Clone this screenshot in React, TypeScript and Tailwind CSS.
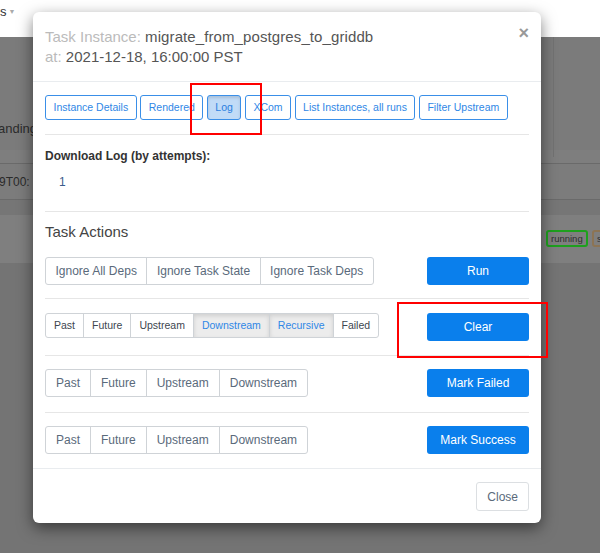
import React from "react";

const font = { fontFamily: '"Liberation Sans", Arial, sans-serif' };

function Hr() {
  return <div className="h-px bg-[#e6e6e6]" />;
}

function Seg({ items, size, active = [] as string[], variant, pad }: { items: string[]; size: "sm" | "md"; active?: string[]; variant: "dark" | "slate"; pad: string }) {
  return (
    <div className="flex">
      {items.map((t, i) => {
        const isActive = active.includes(t);
        const first = i === 0;
        const last = i === items.length - 1;
        return (
          <div
            key={t}
            className={[
              "flex items-center justify-center border border-[#cfd3d7]",
              size === "sm" ? "h-[25px] text-[10.5px]" : "h-[28px] text-[12px]",
              pad,
              first ? "rounded-l-[3px]" : "-ml-px",
              last ? "rounded-r-[3px]" : "",
              isActive
                ? "bg-[#ececec] text-[#2f87e6] shadow-[inset_0_2px_4px_rgba(0,0,0,0.12)] border-[#c2c2c2]"
                : variant === "dark"
                ? "bg-white text-[#3d4650]"
                : "bg-white text-[#5a6a7b]",
            ].join(" ")}
          >
            {t}
          </div>
        );
      })}
    </div>
  );
}

function Primary({ label }: { label: string }) {
  return (
    <div className="w-[102px] h-[28px] rounded-[3px] bg-[#0a7fec] text-white text-[12px] flex items-center justify-center">
      {label}
    </div>
  );
}

function Tab({ label, active = false }: { label: string; active?: boolean }) {
  return (
    <div
      className={
        "h-[25px] px-[7.5px] flex items-center rounded-[3px] border border-[#3a8fe8] text-[10.5px] " +
        (active ? "bg-[#c1dbf7] text-[#2a7fe0] shadow-[inset_0_2px_3px_rgba(0,0,0,0.12)]" : "bg-white text-[#2f87e6]")
      }
    >
      {label}
    </div>
  );
}

export default function App() {
  return (
    <div className="relative w-[600px] h-[553px] overflow-hidden bg-[#747474]" style={font}>
      {/* background page */}
      <div className="flex flex-col">
        <div className="h-[37px] bg-white flex items-start pt-[3px]">
          <span className="text-[13px] text-[#333] leading-[18px]">s</span>
          <span className="text-[7px] text-[#aaa] ml-[2px] mt-[4px]">▼</span>
        </div>
        <div className="h-[113px] bg-[#7b7b7b] relative">
          <div className="absolute left-[-2px] top-[82px] text-[13px] text-[#2b2b2b]">anding</div>
          <div className="absolute left-[553px] top-0 w-px h-[120px] bg-[#727272]" />
        </div>
        <div className="h-[13px] bg-[#7e7e7e]" />
        <div className="h-[37px] bg-[#7c7c7c] border-y border-[#6a6a6a] flex items-center">
          <span className="text-[12px] text-[#2a2a2a] ml-[-1px]">9T00:</span>
        </div>
        <div className="h-[15px] bg-[#767676]" />
        <div className="h-[48px] bg-[#7f7f7f] relative">
          <div className="absolute left-[546px] top-[15px] h-[17px] px-[3px] rounded-[3px] border-2 border-[#1ea01e] text-[9.5px] leading-[13px] text-[#2e2e2e]">
            running
          </div>
          <div className="absolute left-[592px] top-[15px] h-[17px] w-[20px] px-[3px] rounded-[3px] border-2 border-[#8c7454] text-[9.5px] leading-[13px] text-[#2e2e2e]">
            s
          </div>
        </div>
      </div>

      {/* modal */}
      <div className="absolute left-[33px] top-[12px] w-[508px] h-[511px] bg-white rounded-[6px] shadow-[0_5px_15px_rgba(0,0,0,0.5)] flex flex-col">
        <div className="px-[12px] pt-[15px] pb-[14px] border-b border-[#e9ecef] relative">
          <div className="text-[15px] leading-[20px] text-[#bbbbbb]">
            Task Instance: <span className="text-[#555] tracking-[0.1px]">migrate_from_postgres_to_griddb</span>
          </div>
          <div className="text-[15px] leading-[20px] text-[#bbbbbb]">
            at: <span className="text-[#555]">2021-12-18, 16:00:00 PST</span>
          </div>
          <div className="absolute right-[12px] top-[11px] text-[18px] font-bold text-[#999] leading-[20px]">×</div>
        </div>

        <div className="px-[12px] flex flex-col">
          <div className="pt-[13px] flex gap-[3.5px]">
            <Tab label="Instance Details" />
            <Tab label="Rendered" />
            <Tab label="Log" active />
            <Tab label="XCom" />
            <Tab label="List Instances, all runs" />
            <Tab label="Filter Upstream" />
          </div>
          <div className="mt-[14px]">
            <Hr />
          </div>
          <div className="mt-[12px] text-[12px] leading-[18px] font-bold text-[#333]">Download Log (by attempts):</div>
          <div className="mt-[8px] pl-[14px] text-[12px] leading-[18px] text-[#3b5b8c]">1</div>
          <div className="mt-[20px]">
            <Hr />
          </div>
          <div className="mt-[10px] text-[15px] leading-[20px] text-[#444]">Task Actions</div>

          <div className="mt-[15px] flex justify-between items-center">
            <Seg items={["Ignore All Deps", "Ignore Task State", "Ignore Task Deps"]} size="md" variant="slate" pad="px-[9.5px]" />
            <Primary label="Run" />
          </div>
          <div className="mt-[13px]">
            <Hr />
          </div>
          <div className="mt-[14px] flex justify-between items-start">
            <Seg
              items={["Past", "Future", "Upstream", "Downstream", "Recursive", "Failed"]}
              size="sm"
              variant="dark"
              pad="px-[8px]"
              active={["Downstream", "Recursive"]}
            />
            <Primary label="Clear" />
          </div>
          <div className="mt-[14px]">
            <Hr />
          </div>
          <div className="mt-[13px] flex justify-between items-center">
            <Seg items={["Past", "Future", "Upstream", "Downstream"]} size="md" variant="slate" pad="px-[10px]" />
            <Primary label="Mark Failed" />
          </div>
          <div className="mt-[15px]">
            <Hr />
          </div>
          <div className="mt-[13px] flex justify-between items-center">
            <Seg items={["Past", "Future", "Upstream", "Downstream"]} size="md" variant="slate" pad="px-[10px]" />
            <Primary label="Mark Success" />
          </div>
        </div>

        <div className="mt-[14px] border-t border-[#e9ecef] px-[12px] pt-[13px] flex justify-end">
          <div className="h-[29px] px-[10px] flex items-center rounded-[3px] border border-[#dcdfe2] text-[12px] text-[#5a6a7b]">
            Close
          </div>
        </div>
      </div>

      {/* annotations */}
      <div className="absolute left-[190px] top-[83px] w-[72px] h-[52px] border-2 border-[#ff0000]" />
      <div className="absolute left-[397px] top-[302px] w-[151px] h-[56px] border-2 border-[#ff0000]" />
    </div>
  );
}
